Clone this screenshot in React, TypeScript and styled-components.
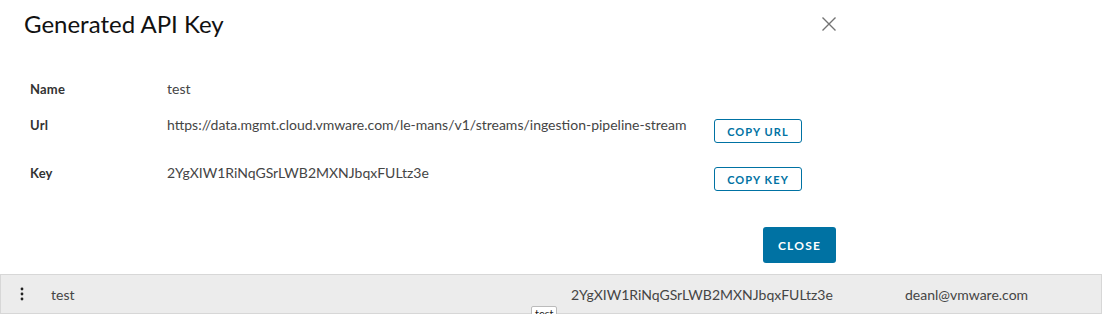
import * as React from "react";
import styled, { createGlobalStyle } from "styled-components";

// // // //

const GlobalStyle = createGlobalStyle`
    html, body {
        margin: 0;
        padding: 0;
        background: #fff;
        font-family: Lato, "Open Sans", "Liberation Sans", sans-serif;
        color: #333;
    }
`;

const Modal = styled.section`
    width: 860px;
    box-sizing: border-box;
    padding: 8px 24px 11px 24px;
`;

const Header = styled.header`
    display: flex;
    align-items: center;
    justify-content: space-between;
    height: 32px;
`;

const Title = styled.h3`
    margin: 0;
    font-size: 24px;
    font-weight: 400;
    line-height: 30px;
    color: #111;
`;

const CloseIcon = styled.button`
    border: 0;
    background: none;
    padding: 0;
    width: 16px;
    height: 16px;
    margin-right: -1px;
    cursor: pointer;
    color: #737373;
    display: flex;
`;

const Details = styled.div`
    margin-top: 39px;
    padding-left: 6px;
`;

const DetailRow = styled.div<{ $tall?: boolean }>`
    display: grid;
    grid-template-columns: 137px 547px auto;
    align-items: start;
    height: ${p => (p.$tall ? "48px" : "36px")};
`;

const Label = styled.span`
    font-size: 13px;
    font-weight: 700;
    line-height: 20px;
    letter-spacing: 0.2px;
    color: #333;
`;

const Value = styled.span`
    font-size: 14px;
    line-height: 20px;
    color: #454545;
    white-space: nowrap;
`;

const OutlineButton = styled.button`
    margin-top: 4px;
    width: 88px;
    height: 24px;
    box-sizing: border-box;
    border: 1px solid #0072a3;
    border-radius: 3px;
    background: #fff;
    color: #0072a3;
    font-family: inherit;
    font-size: 11px;
    font-weight: 700;
    letter-spacing: 1.1px;
    cursor: pointer;
`;

const Footer = styled.footer`
    display: flex;
    justify-content: flex-end;
    margin-top: 16px;
`;

const PrimaryButton = styled.button`
    height: 36px;
    width: 73px;
    border: 0;
    border-radius: 3px;
    background: #0072a3;
    color: #fff;
    font-family: inherit;
    font-size: 12px;
    font-weight: 700;
    letter-spacing: 1.2px;
    cursor: pointer;
`;

const GridRow = styled.div`
    position: relative;
    width: 1102px;
    box-sizing: border-box;
    height: 40px;
    border: 1px solid #d7d7d7;
    background: #ececec;
    display: flex;
    align-items: center;
    font-size: 14px;
    color: #454545;
`;

const Cell = styled.div<{ $width: number }>`
    width: ${p => p.$width}px;
    flex: none;
    white-space: nowrap;
`;

const Kebab = styled.div`
    width: 50px;
    flex: none;
    display: flex;
    padding-left: 19px;
    box-sizing: border-box;
    color: #222;
`;

const Tooltip = styled.div`
    position: absolute;
    left: 530px;
    top: 31px;
    padding: 0 3px;
    font-size: 11px;
    line-height: 14px;
    background: #fff;
    border: 1px solid #bbb;
    border-radius: 2px;
    color: #222;
`;

export default function App() {
    const url =
        "https://data.mgmt.cloud.vmware.com/le-mans/v1/streams/ingestion-pipeline-stream";
    const key = "2YgXIW1RiNqGSrLWB2MXNJbqxFULtz3e";

    return (
        <>
            <GlobalStyle />
            <Modal>
                <Header>
                    <Title>Generated API Key</Title>
                    <CloseIcon aria-label="Close">
                        <svg width="16" height="16" viewBox="0 0 16 16">
                            <path
                                d="M1.5 1.5 L14.5 14.5 M14.5 1.5 L1.5 14.5"
                                stroke="currentColor"
                                strokeWidth="1.4"
                                fill="none"
                            />
                        </svg>
                    </CloseIcon>
                </Header>

                <Details>
                    <DetailRow>
                        <Label>Name</Label>
                        <Value>test</Value>
                    </DetailRow>
                    <DetailRow $tall>
                        <Label>Url</Label>
                        <Value>{url}</Value>
                        <OutlineButton>COPY URL</OutlineButton>
                    </DetailRow>
                    <DetailRow $tall>
                        <Label>Key</Label>
                        <Value>{key}</Value>
                        <OutlineButton>COPY KEY</OutlineButton>
                    </DetailRow>
                </Details>

                <Footer>
                    <PrimaryButton>CLOSE</PrimaryButton>
                </Footer>
            </Modal>

            <GridRow>
                <Kebab>
                    <svg width="4" height="14" viewBox="0 0 4 14">
                        <circle cx="2" cy="2" r="1.4" fill="currentColor" />
                        <circle cx="2" cy="7" r="1.4" fill="currentColor" />
                        <circle cx="2" cy="12" r="1.4" fill="currentColor" />
                    </svg>
                </Kebab>
                <Cell $width={520}>test</Cell>
                <Cell $width={334}>{key}</Cell>
                <Cell $width={160}>deanl@vmware.com</Cell>
                {/* hover tooltip from the name cell */}
                <Tooltip>test</Tooltip>
            </GridRow>
        </>
    );
}
